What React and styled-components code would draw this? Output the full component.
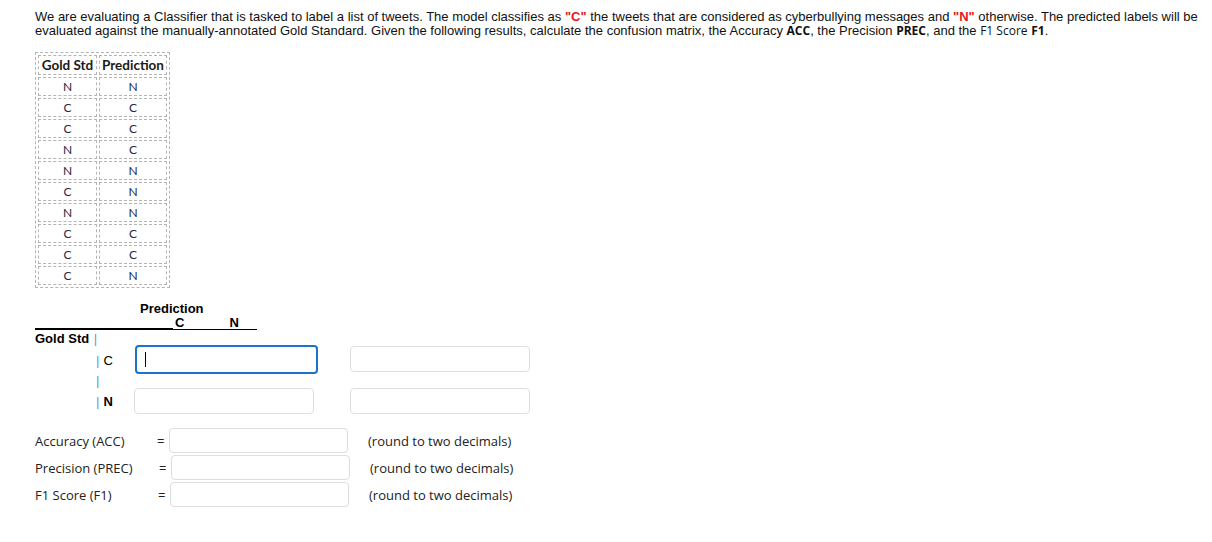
import React from 'react'
import styled, { createGlobalStyle } from 'styled-components'

const GlobalStyle = createGlobalStyle`
    body {
        margin: 0;
        background: #fff;
        color: #000;
        font-family: "Liberation Sans", Arial, sans-serif;
    }
`
const Page = styled.div`
    padding: 10px 0 20px 35px;
    width: 1170px;
`
const Intro = styled.p`
    margin: 0;
    font-size: 13px;
    line-height: 14px;
    color: #111;
`
const Quote = styled.b`
    color: #e8171d;
`
const Term = styled.b`
    font-family: "Open Sans", sans-serif;
    font-size: 12px;
`
const Soft = styled.span`
    font-family: "Open Sans", sans-serif;
    font-size: 12px;
`
const DataTable = styled.table`
    margin: 14px 0 0 0;
    border: 1px dashed #b4b4b4;
    border-spacing: 2px;
    font-family: Lato, sans-serif;
    th, td {
        border: 1px dashed #b4b4b4;
        padding: 0;
        height: 17px;
        text-align: center;
    }
    td {
        font-size: 12px;
        color: #1f2a44;
    }
    th {
        height: 18px;
        font-size: 13.5px;
        font-weight: 700;
        color: #1a1a1a;
    }
    th:first-child { width: 57px; }
    th:last-child { width: 66px; }
`
const Matrix = styled.div`
    margin-top: 14px;
    display: grid;
    grid-template-columns: 100px 215px 180px;
    font-size: 13px;
`
const Caption = styled.div`
    grid-column: 1 / 4;
    padding-left: 105px;
    font-weight: 700;
    line-height: 14px;
`
const HeadLine = styled.div`
    grid-column: 1 / 4;
    display: flex;
    align-items: flex-end;
    height: 14px;
`
const Rule = styled.div`
    width: 138px;
    border-bottom: 2px solid #000;
`
const ColHeads = styled.span`
    display: inline-flex;
    width: 82px;
    font-weight: 700;
    line-height: 12px;
    border-bottom: 1px solid #000;
    padding-left: 2px;
    gap: 45px;
`
const GoldLabel = styled.div`
    grid-column: 1 / 4;
    font-weight: 700;
    line-height: 15px;
    padding-top: 1px;
`
const Bar = styled.span`
    color: #5b9bd5;
    font-weight: 400;
    margin: 0 4px 0 ${p => p.$indent || 3}px;
`
const RowLabel = styled.div`
    display: flex;
    align-items: center;
    padding-left: 58px;
    font-weight: ${p => (p.$bold ? 700 : 400)};
`
const Spacer = styled.div`
    grid-column: 1 / 4;
    height: 14px;
    line-height: 14px;
    padding-left: 58px;
`
const CellWrap = styled.div`
    position: relative;
`
const Field = styled.input`
    display: block;
    box-sizing: border-box;
    width: 180px;
    height: 26px;
    border: 1px solid #dedede;
    border-radius: 4px;
    background: #fff;
    outline: none;
    ${p => p.$focus && `
        border: 2px solid #1b74c9;
        width: 183px;
        height: 29px;
        margin-top: -1px;
    `}
`
const Caret = styled.span`
    position: absolute;
    left: 10px;
    top: 6px;
    width: 1px;
    height: 15px;
    background: #000;
`
const Scores = styled.div`
    margin-top: 14px;
    display: grid;
    grid-template-columns: 122px 12px 199px auto;
    row-gap: 2px;
    align-items: center;
    font-family: "Open Sans", sans-serif;
    font-size: 13px;
    color: #222;
`
const ScoreField = styled.input`
    box-sizing: border-box;
    width: 179px;
    height: 25px;
    border: 1px solid #dedede;
    border-radius: 4px;
    outline: none;
    margin-left: ${p => p.$shift || 0}px;
`
const Hint = styled.span`
    margin-left: ${p => p.$shift || 0}px;
`

const rows = [
    ['N', 'N'], ['C', 'C'], ['C', 'C'], ['N', 'C'], ['N', 'N'],
    ['C', 'N'], ['N', 'N'], ['C', 'C'], ['C', 'C'], ['C', 'N'],
]

const scores = [
    { label: 'Accuracy (ACC)', shift: 0 },
    { label: 'Precision (PREC)', shift: 2 },
    { label: 'F1 Score (F1)', shift: 1 },
]

const App = () => {
    return (
        <Page>
            <GlobalStyle />
            <Intro>
                We are evaluating a Classifier that is tasked to label a list of tweets. The model classifies as <Quote>"C"</Quote> the
                tweets that are considered as cyberbullying messages and <Quote>"N"</Quote> otherwise. The predicted labels will be
                evaluated against the manually-annotated Gold Standard. Given the following results, calculate the confusion matrix, the
                Accuracy <Term>ACC</Term>, the Precision <Term>PREC</Term>, and the <Soft>F1 Score</Soft> <Term>F1</Term>.
            </Intro>

            <DataTable>
                <thead>
                    <tr>
                        <th>Gold Std</th>
                        <th>Prediction</th>
                    </tr>
                </thead>
                <tbody>
                    {rows.map(([gold, pred], i) => (
                        <tr key={i}>
                            <td>{gold}</td>
                            <td>{pred}</td>
                        </tr>
                    ))}
                </tbody>
            </DataTable>

            <Matrix>
                <Caption>Prediction</Caption>
                <HeadLine>
                    <Rule />
                    <ColHeads><span>C</span><span>N</span></ColHeads>
                </HeadLine>
                <GoldLabel>Gold Std <Bar $indent={1}>|</Bar></GoldLabel>

                <RowLabel><Bar $indent={0}>|</Bar> C</RowLabel>
                <CellWrap>
                    <Field $focus />
                    <Caret />
                </CellWrap>
                <CellWrap><Field /></CellWrap>

                <Spacer><Bar $indent={0}>|</Bar></Spacer>

                <RowLabel $bold><Bar $indent={0}>|</Bar> N</RowLabel>
                <CellWrap><Field style={{ marginLeft: -1 }} /></CellWrap>
                <CellWrap><Field /></CellWrap>
            </Matrix>

            <Scores>
                {scores.map(s => (
                    <React.Fragment key={s.label}>
                        <span>{s.label}</span>
                        <Hint $shift={s.shift}>=</Hint>
                        <ScoreField $shift={s.shift} />
                        <Hint $shift={s.shift}>(round to two decimals)</Hint>
                    </React.Fragment>
                ))}
            </Scores>
        </Page>
    )
}

export default App
